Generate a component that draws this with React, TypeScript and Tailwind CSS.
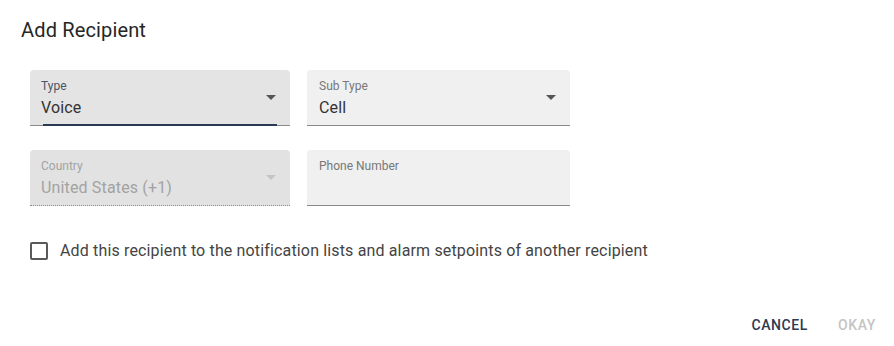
import React from "react";

function Arrow({ color }: { color: string }) {
  return (
    <svg width="10" height="5" viewBox="0 0 10 5" className="shrink-0">
      <path d="M0 0 L10 0 L5 5 Z" fill={color} />
    </svg>
  );
}

export default function App() {
  return (
    <div
      className="w-[894px] h-[346px] bg-white relative"
      style={{ fontFamily: "Roboto, 'Liberation Sans', sans-serif" }}
    >
      <div className="pt-[18px] pl-[21px] text-[20px] font-normal tracking-[0.15px] text-[#262626] leading-[24px]">
        Add Recipient
      </div>
      <div className="pl-[30px] pt-[28px] flex flex-col gap-[24px]">
        <div className="flex gap-[17px]">
          {/* Type */}
          <div className="relative w-[260px] h-[56px] bg-[#e4e4e4] rounded-t-[4px] border-b border-[#8a8a8a]">
            <div className="pl-[11px] pt-[9px] text-[12px] leading-[14px] text-[#4a5568]">Type</div>
            <div className="pl-[11px] pt-[5px] text-[16px] tracking-[0.15px] leading-[20px] text-[#333]">Voice</div>
            <div className="absolute right-[14px] top-[25px] flex"><Arrow color="#555" /></div>
            <div className="absolute left-[13px] right-[13px] bottom-[-1px] h-[2px] bg-[#2a3a55]" />
          </div>
          {/* Sub Type */}
          <div className="relative w-[263px] h-[56px] bg-[#f0f0f0] rounded-t-[4px] border-b border-[#8a8a8a]">
            <div className="pl-[12px] pt-[9px] text-[12px] leading-[14px] text-[#777]">Sub Type</div>
            <div className="pl-[12px] pt-[5px] text-[16px] tracking-[0.15px] leading-[20px] text-[#333]">Cell</div>
            <div className="absolute right-[14px] top-[25px] flex"><Arrow color="#555" /></div>
          </div>
        </div>
        <div className="flex gap-[17px]">
          {/* Country */}
          <div className="relative w-[260px] h-[56px] bg-[#e2e2e2] rounded-t-[4px] border-b border-dotted border-[#8a8a8a]">
            <div className="pl-[11px] pt-[9px] text-[12px] leading-[14px] text-[#a3a3a3]">Country</div>
            <div className="pl-[11px] pt-[5px] text-[16px] tracking-[0.15px] leading-[20px] text-[#a3a3a3]">United States (+1)</div>
            <div className="absolute right-[14px] top-[25px] flex"><Arrow color="#c4c4c4" /></div>
          </div>
          {/* Phone */}
          <div className="relative w-[263px] h-[56px] bg-[#f0f0f0] rounded-t-[4px] border-b border-[#8a8a8a]">
            <div className="pl-[12px] pt-[9px] text-[12px] leading-[14px] text-[#777]">Phone Number</div>
          </div>
        </div>
        <div className="flex items-center gap-[12px] pt-[11px]">
          <div className="w-[18px] h-[18px] border-2 border-[#5a5a5a] rounded-[2px]" />
          <div className="text-[16px] tracking-[0.15px] leading-[20px] text-[#444]">
            Add this recipient to the notification lists and alarm setpoints of another recipient
          </div>
        </div>
      </div>
      <div className="absolute right-[18px] bottom-[11px] flex gap-[30px] text-[14px] font-medium tracking-[0.6px] leading-[20px]">
        <span className="text-[#2c3a52]">CANCEL</span>
        <span className="text-[#c4c4c4]">OKAY</span>
      </div>
    </div>
  );
}
